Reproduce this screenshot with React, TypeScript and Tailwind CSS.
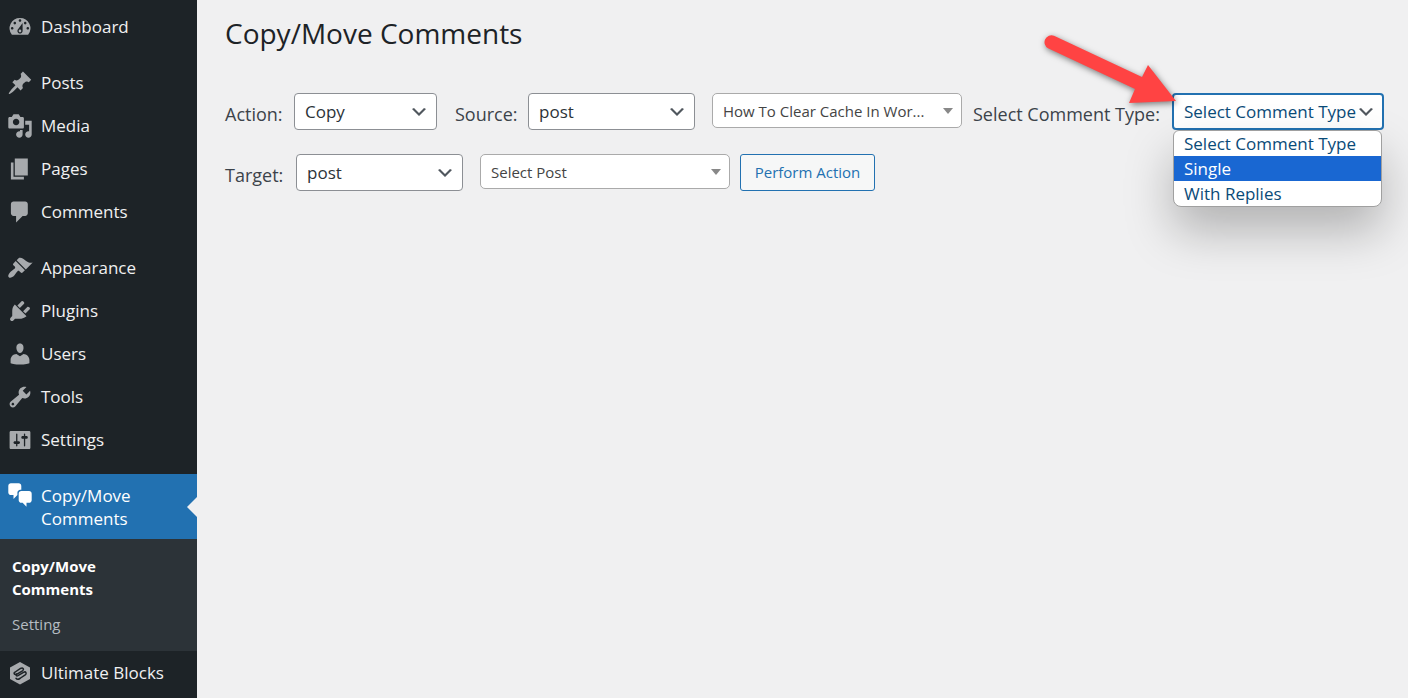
import type { ReactNode } from "react"

const icons = {
  dashboard:
    "M3.76 16h12.48A7.998 7.998 0 0 0 10 3a7.998 7.998 0 0 0-6.24 13zM10 4c.55 0 1 .45 1 1s-.45 1-1 1-1-.45-1-1 .45-1 1-1zM6 6c.55 0 1 .45 1 1s-.45 1-1 1-1-.45-1-1 .45-1 1-1zm8 0c.55 0 1 .45 1 1s-.45 1-1 1-1-.45-1-1 .45-1 1-1zm-5.37 5.55L12 7v6c0 1.1-.9 2-2 2s-2-.9-2-2c0-.57.24-1.08.63-1.45zM4 10c.55 0 1 .45 1 1s-.45 1-1 1-1-.45-1-1 .45-1 1-1zm12 0c.55 0 1 .45 1 1s-.45 1-1 1-1-.45-1-1 .45-1 1-1zm-5 3c0-.55-.45-1-1-1s-1 .45-1 1 .45 1 1 1 1-.45 1-1z",
  posts:
    "M10.44 3.02l1.82-1.82 6.36 6.35-1.83 1.82c-1.05-.68-2.48-.57-3.41.36l-.75.75c-.92.93-1.04 2.35-.35 3.41l-1.83 1.82-2.41-2.41-2.8 2.79c-.42.42-3.38 2.71-3.8 2.29s1.86-3.39 2.28-3.81l2.79-2.79L4.1 9.36l1.83-1.82c1.05.69 2.48.57 3.4-.36l.75-.75c.93-.92 1.05-2.35.36-3.41z",
  media:
    "M13 11V4c0-.55-.45-1-1-1h-1.67L9 1H5L3.67 3H2c-.55 0-1 .45-1 1v7c0 .55.45 1 1 1h10c.55 0 1-.45 1-1zM7 4.5c1.38 0 2.5 1.12 2.5 2.5S8.38 9.5 7 9.5 4.5 8.38 4.5 7 5.62 4.5 7 4.5zM14 6h5v10.5c0 1.38-1.12 2.5-2.5 2.5S14 17.88 14 16.5s1.12-2.5 2.5-2.5c.17 0 .34.02.5.05V9h-3V6zm-4 8.05V13h2v3.5c0 1.38-1.12 2.5-2.5 2.5S7 17.88 7 16.5 8.12 14 9.5 14c.17 0 .34.02.5.05z",
  pages: "M6 15V2h10v13H6zm-1 1h8v2H3V5h2v11z",
  comments:
    "M5 2h9c1.1 0 2 .9 2 2v7c0 1.1-.9 2-2 2h-2l-5 5v-5H5c-1.1 0-2-.9-2-2V4c0-1.1.9-2 2-2z",
  appearance:
    "M14.48 11.06L7.41 3.99l1.5-1.5c.5-.56 2.3-.47 3.51.32 1.21.8 1.43 1.28 2.91 2.1 1.18.64 2.45 1.26 4.45.85zm-.71.71L6.7 4.7 4.93 6.47c-.39.39-.39 1.02 0 1.41l1.06 1.06c.39.39.39 1.03 0 1.42-.6.6-1.43 1.11-2.21 1.69-.35.26-.7.53-1.01.84C1.43 14.23.4 16.08 1.4 17.07c.99 1 2.84-.03 4.18-1.36.31-.31.58-.66.85-1.02.57-.78 1.08-1.61 1.69-2.21.39-.39 1.02-.39 1.41 0l1.06 1.06c.39.39 1.02.39 1.41 0z",
  plugins:
    "M13.11 4.36L9.87 7.6 8 5.73l3.24-3.24c.35-.34 1.05-.2 1.56.32.52.51.66 1.21.31 1.55zm-8 1.77l.91-1.12 9.01 9.01-1.19.84c-.71.71-2.63 1.16-3.82 1.16H6.14L4.9 17.26c-.59.59-1.54.59-2.12 0-.59-.58-.59-1.53 0-2.12l1.24-1.24v-3.88c0-1.13.4-3.19 1.09-3.89zm7.26 3.97l3.24-3.24c.34-.35 1.04-.21 1.55.31.52.51.66 1.21.31 1.55l-3.24 3.25z",
  users:
    "M10 9.25c-2.27 0-2.73-3.44-2.73-3.44C7 4.02 7.82 2 9.97 2c2.16 0 2.98 2.02 2.71 3.81 0 0-.41 3.44-2.68 3.44zm0 2.57L12.72 10c2.39 0 4.52 2.33 4.52 4.53v2.49s-3.65 1.13-7.24 1.13c-3.65 0-7.24-1.13-7.24-1.13v-2.49c0-2.25 1.94-4.48 4.47-4.48z",
  tools:
    "M16.68 9.77c-1.34 1.34-3.3 1.67-4.95.99l-5.41 6.52c-.99.99-2.59.99-3.58 0s-.99-2.59 0-3.57l6.52-5.42c-.68-1.65-.35-3.61.99-4.95 1.28-1.28 3.12-1.62 4.72-1.06l-2.89 2.89 2.82 2.82 2.86-2.87c.53 1.58.18 3.39-1.08 4.65zM3.81 16.21c.4.39 1.04.39 1.43 0 .4-.4.4-1.04 0-1.43-.39-.4-1.03-.4-1.43 0-.39.39-.39 1.03 0 1.43z",
  settings:
    "M18 16V4c0-.55-.45-1-1-1H3c-.55 0-1 .45-1 1v12c0 .55.45 1 1 1h14c.55 0 1-.45 1-1zM8 11h1c.55 0 1 .45 1 1s-.45 1-1 1H8v1.5c0 .28-.22.5-.5.5s-.5-.22-.5-.5V13H6c-.55 0-1-.45-1-1s.45-1 1-1h1V5.5c0-.28.22-.5.5-.5s.5.22.5.5V11zm5-2h-1c-.55 0-1-.45-1-1s.45-1 1-1h1V5.5c0-.28.22-.5.5-.5s.5.22.5.5V7h1c.55 0 1 .45 1 1s-.45 1-1 1h-1v5.5c0 .28-.22.5-.5.5s-.5-.22-.5-.5V9z",
  chat:
    "M11 6h-.82C9.07 6 8 7.2 8 8.16V10l-3 3v-3H3c-1.1 0-2-.9-2-2V3c0-1.1.9-2 2-2h6c1.1 0 2 .9 2 2v3zm0 1h6c1.1 0 2 .9 2 2v5c0 1.1-.9 2-2 2h-2v3l-3-3h-1c-1.1 0-2-.9-2-2V9c0-1.1.9-2 2-2z",
}

type IconName = keyof typeof icons

const menu: { icon: IconName; label: string }[][] = [
  [{ icon: "dashboard", label: "Dashboard" }],
  [
    { icon: "posts", label: "Posts" },
    { icon: "media", label: "Media" },
    { icon: "pages", label: "Pages" },
    { icon: "comments", label: "Comments" },
  ],
  [
    { icon: "appearance", label: "Appearance" },
    { icon: "plugins", label: "Plugins" },
    { icon: "users", label: "Users" },
    { icon: "tools", label: "Tools" },
    { icon: "settings", label: "Settings" },
  ],
]

function Icon({ name }: { name: IconName }) {
  return (
    <svg viewBox="0 0 20 20" className="size-[26px] shrink-0" fill="currentColor" fillRule="evenodd" aria-hidden="true">
      <path d={icons[name]} />
    </svg>
  )
}

function Sidebar() {
  return (
    <nav className="w-[197px] shrink-0 bg-[#1d2327] pt-[5px] text-[17px] leading-[23px] text-[#f0f0f1]">
      {menu.map((group) => (
        <ul key={group[0].label} className="mb-[13px]">
          {group.map((item) => (
            <li key={item.label}>
              <a href="#" className="flex h-[43px] items-center gap-2 pl-[7px]">
                <span className="text-[#a7aaad]"><Icon name={item.icon} /></span>
                {item.label}
              </a>
            </li>
          ))}
        </ul>
      ))}

      <a href="#" className="relative flex items-start gap-2 bg-[#2271b1] pb-[9px] pl-[7px] pt-[10px] text-white">
        <span className="-mt-0.5"><Icon name="chat" /></span>
        <span className="w-28">Copy/Move Comments</span>
        <span className="absolute right-0 top-1/2 -translate-y-1/2 border-y-10 border-r-10 border-y-transparent border-r-[#f0f0f1]" />
      </a>
      <ul className="bg-[#2c3338] px-3 pb-[15px] pt-4 text-[15px]">
        <li><a href="#" className="block w-28 font-bold text-white">Copy/Move Comments</a></li>
        <li><a href="#" className="mt-3 block text-[#b5bcc2]">Setting</a></li>
      </ul>

      <a href="#" className="flex h-[43px] items-center gap-2 pl-[7px]">
        <svg viewBox="0 0 26 26" className="size-[26px] shrink-0" fill="none" aria-hidden="true">
          <path d="M13 2l10 5.500v11.500L13 24.500 3 19V7.500z" fill="#a7aaad" />
          <path
            d="M7.500 12.500l6-4c2.500-1.500 4 1 2 2.300l-5.500 3.400c-1.500 1-.5 2.300 1 1.500l5.500-3.400c2.500-1.300 3.500 1.200 1.700 2.500l-5.400 3.700"
            stroke="#1d2327"
            strokeWidth="1.500"
            strokeLinecap="round"
          />
          <path d="M7.500 12.500c-1 1.300.2 2.600 2 1.500M12.800 18.500c-1.300.8-3 .8-3.800-.2" stroke="#1d2327" strokeWidth="1.500" strokeLinecap="round" />
        </svg>
        Ultimate Blocks
      </a>
    </nav>
  )
}

type SelectProps = {
  id: string
  options: string[]
  box: string
  children?: ReactNode
}

function Select({ id, options, box, children }: SelectProps) {
  return (
    <div className="relative">
      <select id={id} className={"block h-[37px] appearance-none rounded-[4px] bg-white pl-2.5 pr-6 pt-0.5 text-[17px] outline-none " + box}>
        {options.map((option) => <option key={option}>{option}</option>)}
      </select>
      <svg viewBox="0 0 20 20" className="pointer-events-none absolute right-2 top-[9px] size-5" fill="#50575e" aria-hidden="true">
        <path d="M5 6l5 5 5-5 2 1-7 7-7-7z" />
      </svg>
      {children}
    </div>
  )
}

function PostSelect({ label, value }: { label: string; value: string }) {
  return (
    <div className="relative">
      <select aria-label={label} className="block h-[35px] w-[250px] appearance-none rounded-[5px] border border-[#aaa] bg-white pl-2.5 pr-7 pt-0.5 text-[15px] text-[#444]">
        <option>{value}</option>
      </select>
      <span className="pointer-events-none absolute right-[9px] top-[15px] border-x-5 border-t-6 border-x-transparent border-t-[#888]" />
    </div>
  )
}

export default function App() {
  return (
    <div className="flex min-h-screen overflow-x-hidden bg-[#f0f0f1] font-['Open_Sans','Noto_Sans',sans-serif]">
      <Sidebar />

      <main className="min-w-0 flex-1 pl-7 pr-6 pt-[15px] text-lg text-[#3c434a]">
        <h1 className="text-[28px] leading-9 text-[#1d2327]">Copy/Move Comments</h1>

        <form className="mt-[42px] space-y-6">
          <div className="flex flex-wrap items-start">
            <label htmlFor="action" className="mr-2.5 w-[59px] pt-[7px]">Action:</label>
            <Select id="action" options={["Copy", "Move"]} box="w-[143px] border border-[#8c8f94] text-[#2c3338]" />
            <label htmlFor="source" className="ml-[18px] mr-2.5 w-[63px] pt-[7px]">Source:</label>
            <Select id="source" options={["post", "page"]} box="w-[167px] border border-[#8c8f94] text-[#2c3338]" />
            <div className="ml-[17px]">
              <PostSelect label="Source post" value="How To Clear Cache In Wor..." />
            </div>
            <label htmlFor="comment-type" className="ml-[11px] mr-[9px] w-[190px] whitespace-nowrap pt-[7px]">Select Comment Type:</label>
            <Select id="comment-type" options={["Select Comment Type", "Single", "With Replies"]} box="w-[212px] border-2 border-[#2271b1] text-[#0a4b78]">
              <ul role="listbox" className="absolute left-px top-[37px] z-10 w-[209px] overflow-hidden rounded-b-lg rounded-t-md border border-[#a0a0a0] bg-white text-[17px] leading-[25px] text-[#0a4b78] shadow-[0_24px_48px_rgba(0,0,0,0.26)]">
                <li role="option" className="pl-2.5">Select Comment Type</li>
                <li role="option" aria-selected="true" className="bg-[#1967d2] pl-2.5 text-white">Single</li>
                <li role="option" className="pl-2.5">With Replies</li>
              </ul>
              {/* arrow pointing at the comment type */}
              <svg viewBox="0 0 150 90" className="pointer-events-none absolute -left-[136px] -top-[66px] z-20 h-[90px] w-[150px] drop-shadow-[1px_2px_3px_rgba(0,0,0,0.5)]" fill="#ff4343" aria-hidden="true">
                <path d="M18 8.700L106 50l6-12 28 36-47 2 6-14L12 21.300A7 7 0 0 1 18 8.700z" />
              </svg>
            </Select>
          </div>

          <div className="flex flex-wrap items-start">
            <label htmlFor="target" className="mr-3.5 w-[57px] pt-[7px]">Target:</label>
            <Select id="target" options={["post", "page"]} box="w-[167px] border border-[#8c8f94] text-[#2c3338]" />
            <div className="ml-[17px]">
              <PostSelect label="Target post" value="Select Post" />
            </div>
            <button type="button" className="ml-2.5 h-[37px] w-[135px] rounded-[3px] border border-[#2271b1] bg-[#f6f7f7] text-[15px] text-[#2271b1]">
              Perform Action
            </button>
          </div>
        </form>
      </main>
    </div>
  )
}
